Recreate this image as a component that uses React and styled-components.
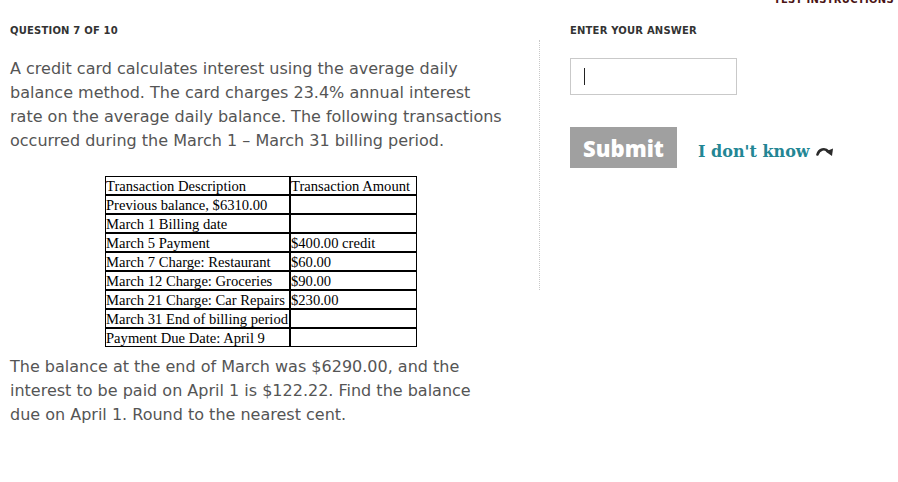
import React from "react";
import styled, { createGlobalStyle } from "styled-components";

const GlobalStyle = createGlobalStyle`
  html, body {
    margin: 0;
    padding: 0;
    background: #fff;
  }
  body {
    font-family: "DejaVu Sans", Verdana, sans-serif;
    width: 898px;
    height: 482px;
    overflow: hidden;
  }
`;

const Page = styled.div`
  position: relative;
  display: flex;
  width: 898px;
  height: 482px;
`;

const TopLink = styled.a`
  position: absolute;
  top: -6px;
  right: 4px;
  font-size: 10px;
  font-weight: bold;
  color: #4a1414;
  letter-spacing: 0.3px;
  text-decoration: none;
`;

const QuestionColumn = styled.section`
  width: 520px;
  padding: 25px 0 0 10px;
  box-sizing: content-box;
`;

const Divider = styled.div`
  width: 0;
  margin: 40px 0 0 9px;
  height: 250px;
  border-left: 1px dotted #c8c8c8;
`;

const AnswerColumn = styled.section`
  flex: 1;
  padding: 25px 0 0 30px;
`;

const Label = styled.h2`
  margin: 0;
  font-size: 10px;
  font-weight: bold;
  color: #333;
  letter-spacing: 0.2px;
  line-height: 12px;
`;

const Prompt = styled.p`
  margin: ${(p) => p.$top || "0"} 0 0;
  width: ${(p) => p.$width || "495px"};
  font-size: 16px;
  line-height: 24px;
  color: #555;
`;

const Table = styled.table`
  margin: 23px 0 8px 95px;
  border-spacing: 0;
  font-family: "Liberation Serif", "Times New Roman", serif;
  font-size: 14.6px;
  color: #000;
`;

const Cell = styled.td`
  border: 1px solid #000;
  padding: 0;
  height: 17px;
  line-height: 16px;
  white-space: nowrap;
  width: ${(p) => p.$w};
  vertical-align: middle;
`;

const AnswerInput = styled.div`
  margin-top: 21px;
  width: 167px;
  height: 37px;
  border: 1px solid #c9c9c9;
  display: flex;
  align-items: center;
  padding-left: 13px;
  box-sizing: border-box;
`;

const Caret = styled.span`
  width: 1px;
  height: 17px;
  background: #222;
`;

const Actions = styled.div`
  margin-top: 32px;
  display: flex;
  align-items: center;
  gap: 21px;
`;

const SubmitButton = styled.button`
  width: 107px;
  height: 41px;
  border: none;
  background: #a0a0a0;
  color: #fff;
  font-family: "Open Sans", sans-serif;
  font-weight: 800;
  font-size: 22px;
  padding: 0;
  cursor: pointer;
`;

const SkipLink = styled.a`
  display: flex;
  align-items: center;
  gap: 6px;
  margin-top: 7px;
  font-family: "DejaVu Serif", Georgia, serif;
  font-weight: bold;
  font-size: 16px;
  color: #238694;
  text-decoration: none;
`;

const rows = [
  ["Transaction Description", "Transaction Amount"],
  ["Previous balance, $6310.00", ""],
  ["March 1 Billing date", ""],
  ["March 5 Payment", "$400.00 credit"],
  ["March 7 Charge: Restaurant", "$60.00"],
  ["March 12 Charge: Groceries", "$90.00"],
  ["March 21 Charge: Car Repairs", "$230.00"],
  ["March 31 End of billing period", ""],
  ["Payment Due Date: April 9", ""],
];

const SkipArrow = () => (
  <svg width="19" height="11" viewBox="0 0 19 11">
    <path
      d="M1.5 8.5 C3 3 9 1.5 12.5 5.5"
      fill="none"
      stroke="#2b2b2b"
      strokeWidth="2.6"
      strokeLinecap="round"
    />
    <path d="M9.5 5.5 L17 2.5 L16 10 Z" fill="#2b2b2b" />
  </svg>
);

export default function App() {
  return (
    <>
      <GlobalStyle />
      <Page>
        <TopLink href="#">TEST INSTRUCTIONS</TopLink>
        <QuestionColumn>
          <Label>QUESTION 7 OF 10</Label>
          <Prompt $top="20px">
            A credit card calculates interest using the average daily balance
            method. The card charges 23.4% annual interest rate on the average
            daily balance. The following transactions occurred during the
            March 1 – March 31 billing period.
          </Prompt>
          <Table>
            <tbody>
              {rows.map(([desc, amount]) => (
                <tr key={desc}>
                  <Cell $w="183px">{desc}</Cell>
                  <Cell $w="125px">{amount}</Cell>
                </tr>
              ))}
            </tbody>
          </Table>
          <Prompt $width="480px">
            The balance at the end of March was $6290.00, and the interest to
            be paid on April 1 is $122.22. Find the balance due on April 1.
            Round to the nearest cent.
          </Prompt>
        </QuestionColumn>
        <Divider />
        <AnswerColumn>
          <Label>ENTER YOUR ANSWER</Label>
          <AnswerInput>
            <Caret />
          </AnswerInput>
          <Actions>
            <SubmitButton>Submit</SubmitButton>
            <SkipLink href="#">
              I don't know <SkipArrow />
            </SkipLink>
          </Actions>
        </AnswerColumn>
      </Page>
    </>
  );
}
